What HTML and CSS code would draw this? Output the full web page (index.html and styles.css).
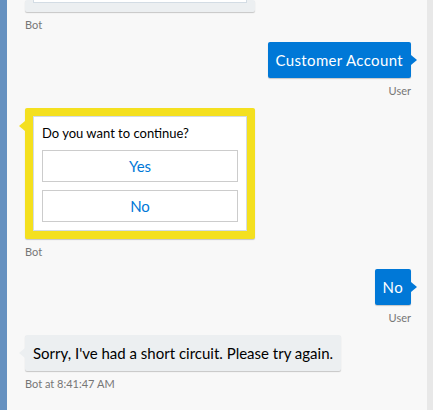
FILE: index.html
```html
<!DOCTYPE html>
<html>
<head>
<meta charset="utf-8">
<link rel="stylesheet" href="styles.css">
</head>
<body>
<div class="app">
  <div class="stripe"></div>
  <div class="chat">
    <div class="msg bot">
      <div class="bubble card top-card"><div class="card-inner stub"></div></div>
      <div class="from">Bot</div>
    </div>
    <div class="msg user">
      <div class="bubble user-bubble">Customer Account<span class="callout"></span></div>
      <div class="from">User</div>
    </div>
    <div class="msg bot">
      <div class="bubble card selected">
        <span class="callout"></span>
        <div class="card-inner">
          <p class="card-text">Do you want to continue?</p>
          <button class="card-btn">Yes</button>
          <button class="card-btn">No</button>
        </div>
      </div>
      <div class="from">Bot</div>
    </div>
    <div class="msg user">
      <div class="bubble user-bubble">No<span class="callout"></span></div>
      <div class="from">User</div>
    </div>
    <div class="msg bot">
      <div class="bubble bot-bubble"><span class="callout"></span>Sorry, I've had a short circuit. Please try again.</div>
      <div class="from">Bot at 8:41:47 AM</div>
    </div>
  </div>
  <div class="scrollbar"></div>
</div>
</body>
</html>
```

FILE: styles.css
```css
html, body {
  margin: 0;
  padding: 0;
}
body {
  font-family: "Segoe UI", "Lato", sans-serif;
  font-size: 15px;
  background: #f8f8f8;
}
.app {
  display: flex;
  width: 433px;
  height: 410px;
  overflow: hidden;
}
.stripe {
  width: 7px;
  flex: none;
  background: #6691c0;
}
.scrollbar {
  width: 6px;
  flex: none;
  background: #e8e8e8;
}
.chat {
  flex: 1;
  padding: 0 16px 0 18px;
  display: flex;
  flex-direction: column;
}
.msg {
  display: flex;
  flex-direction: column;
  margin-bottom: 10px;
}
.msg.user {
  align-items: flex-end;
}
.msg.bot {
  align-items: flex-start;
}
.bubble {
  position: relative;
  border-radius: 2px;
  box-shadow: 0 1px 1px rgba(0, 0, 0, 0.2);
}
.user-bubble {
  background: #0078d7;
  color: #fff;
  padding: 8px;
  line-height: 20px;
  letter-spacing: 0.35px;
}
.bot-bubble {
  background: #eceff1;
  color: #000;
  padding: 8px;
  line-height: 20px;
}
.card {
  width: 214px;
  padding: 8px;
  background: #eceff1;
}
.card.selected {
  background: #f4e01f;
}
.top-card {
  padding-top: 0;
  padding-bottom: 9px;
}
.card-inner {
  background: #fff;
  border: 1px solid #d3dce4;
  padding: 8px;
}
.card-inner.stub {
  height: 2px;
  padding: 0;
  border-top: none;
}
.card-text {
  margin: 0 0 8px;
  font-size: 13px;
  line-height: 17px;
  color: #000;
}
.card-btn {
  display: block;
  width: 100%;
  height: 32px;
  margin: 0;
  padding: 0;
  background: #fff;
  border: 1px solid #cccccc;
  color: #0078d7;
  font-family: inherit;
  font-size: 15px;
}
.card-btn + .card-btn {
  margin-top: 8px;
}
.callout {
  position: absolute;
  top: 13px;
  width: 0;
  height: 0;
  border-top: 5px solid transparent;
  border-bottom: 5px solid transparent;
}
.user-bubble .callout {
  right: -6px;
  border-left: 6px solid #0078d7;
}
.bot-bubble .callout {
  left: -6px;
  border-right: 6px solid #eceff1;
}
.card.selected .callout {
  left: -6px;
  border-right: 6px solid #f4e01f;
}
.from {
  margin-top: 5px;
  font-size: 11px;
  line-height: 15px;
  color: #767676;
}
```
